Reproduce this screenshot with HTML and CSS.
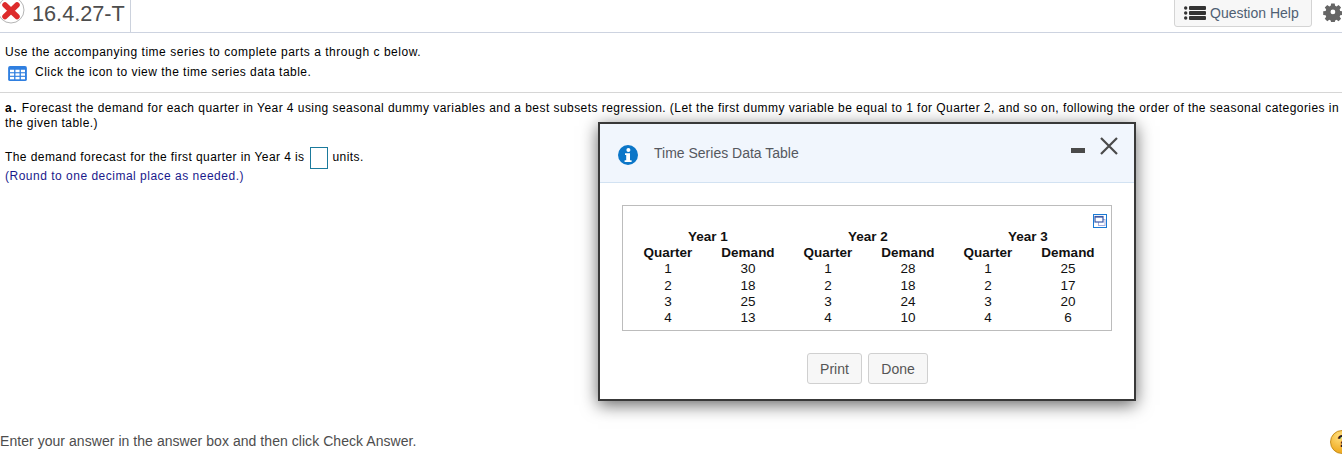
FILE: index.html
```html
<!DOCTYPE html>
<html lang="en">
<head>
<meta charset="utf-8">
<title>16.4.27-T</title>
<link rel="stylesheet" href="styles.css">
</head>
<body>
<div class="page">
  <header class="topbar">
    <div class="title-cell">
      <svg class="x-icon" viewBox="0 0 30 30" width="30" height="30" aria-hidden="true">
        <circle cx="11" cy="10" r="13" fill="#fff" stroke="#b5b5b5" stroke-width="1"/>
        <path d="M5 5 L17 16.5 M17 5 L5 16.5" stroke="#dd2b2b" stroke-width="5.5" stroke-linecap="round"/>
      </svg>
      <span class="title">16.4.27-T</span>
    </div>
    <div class="top-actions">
      <button class="help-btn" type="button">
        <svg viewBox="0 0 22 14" width="22" height="14" aria-hidden="true">
          <g fill="#333">
            <circle cx="1.7" cy="2" r="1.7"/><circle cx="1.7" cy="7" r="1.7"/><circle cx="1.7" cy="12" r="1.7"/>
            <rect x="5" y="0" width="17" height="4" rx="1"/><rect x="5" y="5" width="17" height="4" rx="1"/><rect x="5" y="10" width="17" height="4" rx="1"/>
          </g>
        </svg>
        <span>Question Help</span>
      </button>
      <svg class="gear" viewBox="0 0 24 24" width="20" height="20" aria-hidden="true">
        <path fill="#666" fill-rule="evenodd" d="M9.5 0h5l.6 3.4 2 .8 2.9-2 3.5 3.5-2 2.9.8 2 3.4.6v5l-3.4.6-.8 2 2 2.9-3.5 3.5-2.9-2-2 .8-.6 3.4h-5l-.6-3.4-2-.8-2.9 2-3.5-3.5 2-2.9-.8-2-3.4-.6v-5l3.4-.6.8-2-2-2.9 3.5-3.5 2.9 2 2-.8zM12 8.6a3.4 3.4 0 1 0 0 6.8 3.4 3.4 0 0 0 0-6.8z" transform="scale(.85) translate(2 2)"/>
      </svg>
    </div>
  </header>

  <section class="intro">
    <p>Use the accompanying time series to complete parts a through c below.</p>
    <p class="icon-line">
      <svg viewBox="0 0 20 16" width="19" height="15" aria-hidden="true">
        <rect width="20" height="16" rx="2" fill="#2f7fe0"/>
        <g fill="#fff">
          <rect x="2" y="4" width="4.4" height="2.6"/><rect x="7.8" y="4" width="4.4" height="2.6"/><rect x="13.6" y="4" width="4.4" height="2.6"/>
          <rect x="2" y="7.8" width="4.4" height="2.6"/><rect x="7.8" y="7.8" width="4.4" height="2.6"/><rect x="13.6" y="7.8" width="4.4" height="2.6"/>
          <rect x="2" y="11.6" width="4.4" height="2.6"/><rect x="7.8" y="11.6" width="4.4" height="2.6"/><rect x="13.6" y="11.6" width="4.4" height="2.6"/>
        </g>
      </svg>
      <span>Click the icon to view the time series data table.</span>
    </p>
  </section>

  <section class="question">
    <p class="part"><b>a.</b> Forecast the demand for each quarter in Year 4 using seasonal dummy variables and a best subsets regression. (Let the first dummy variable be equal to 1 for Quarter 2, and so on, following the order of the seasonal categories in the given table.)</p>
    <p class="answer-line">The demand forecast for the first quarter in Year 4 is <span class="answer-box"></span> units.</p>
    <p class="hint">(Round to one decimal place as needed.)</p>
  </section>

  <footer class="footer">Enter your answer in the answer box and then click Check Answer.</footer>
  <div class="help-ball">?</div>

  <div class="modal" role="dialog" aria-label="Time Series Data Table">
    <div class="modal-head">
      <svg class="info" viewBox="0 0 20 20" width="20" height="20" aria-hidden="true">
        <circle cx="10" cy="10" r="10" fill="#0b76c8"/>
        <circle cx="10.4" cy="5" r="2" fill="#fff"/>
        <path fill="#fff" d="M7 8.2h5v7h1.6V17H6.6v-1.8h1.6v-5.2H7z"/>
      </svg>
      <span class="modal-title">Time Series Data Table</span>
      <span class="minimize"></span>
      <svg class="close" viewBox="0 0 18 18" width="18" height="18" aria-hidden="true">
        <path d="M1 1 L17 17 M17 1 L1 17" stroke="#4a4a4a" stroke-width="2.2" fill="none"/>
      </svg>
    </div>
    <div class="modal-body">
      <div class="table-box">
        <svg class="popout" viewBox="0 0 14 14" width="14" height="14" aria-hidden="true">
          <rect x=".5" y=".5" width="13" height="13" fill="#fff" stroke="#1a7ad4"/>
          <rect x="5.5" y="5.5" width="6.5" height="6" fill="#fff" stroke="#a9aede"/>
          <rect x="2" y="2.5" width="8" height="5.5" fill="#fff" stroke="#3d5aa8" stroke-width="1.2"/>
          <rect x="2" y="2" width="8" height="1.6" fill="#3d5aa8"/>
        </svg>
        <table class="data">
          <thead>
            <tr><th colspan="2">Year 1</th><th colspan="2">Year 2</th><th colspan="2">Year 3</th></tr>
            <tr><th>Quarter</th><th>Demand</th><th>Quarter</th><th>Demand</th><th>Quarter</th><th>Demand</th></tr>
          </thead>
          <tbody>
            <tr><td>1</td><td>30</td><td>1</td><td>28</td><td>1</td><td>25</td></tr>
            <tr><td>2</td><td>18</td><td>2</td><td>18</td><td>2</td><td>17</td></tr>
            <tr><td>3</td><td>25</td><td>3</td><td>24</td><td>3</td><td>20</td></tr>
            <tr><td>4</td><td>13</td><td>4</td><td>10</td><td>4</td><td>6</td></tr>
          </tbody>
        </table>
      </div>
      <div class="modal-actions">
        <button class="btn btn-print" type="button">Print</button>
        <button class="btn btn-done" type="button">Done</button>
      </div>
    </div>
  </div>
</div>
</body>
</html>
```
FILE: styles.css
```css
* { box-sizing: border-box; }
html, body { margin: 0; padding: 0; }
body {
  width: 1342px;
  height: 455px;
  overflow: hidden;
  background: #fff;
  font-family: "Liberation Sans", Arial, sans-serif;
  font-size: 12px;
  color: #000;
}
p { margin: 0; }
.page {
  position: relative;
  width: 1342px;
  height: 455px;
  overflow: hidden;
  display: flex;
  flex-direction: column;
}
.topbar {
  height: 33px;
  flex: none;
  display: flex;
  justify-content: space-between;
  border-bottom: 1px solid #cdd3e0;
}
.title-cell {
  width: 131px;
  height: 32px;
  border-right: 1px solid #ccd2dd;
  display: flex;
  align-items: flex-start;
}
.x-icon { flex: none; width: 30px; height: 30px; }
.title {
  font-size: 21.7px;
  line-height: 25px;
  margin-top: 1px;
  color: #4d4d4d;
  margin-left: 2px;
}
.top-actions { display: flex; align-items: flex-start; }
.help-btn {
  width: 138px;
  height: 28px;
  margin-top: -1px;
  padding: 0 0 0 9px;
  display: flex;
  align-items: center;
  gap: 4px;
  background: #f7f7f7;
  border: 1px solid #d4d4d4;
  border-radius: 0 0 3px 3px;
  font: 14px "Liberation Sans", Arial, sans-serif;
  color: #4f5f73;
}
.gear { margin: 2px -1px 0 11px; }
.intro {
  height: 60px;
  flex: none;
  padding: 9px 5px 0;
  border-bottom: 1px solid #d6d6d6;
  line-height: 20px;
  letter-spacing: .53px;
}
.icon-line { display: flex; align-items: center; gap: 8px; margin-left: 3px; letter-spacing: .47px; }
.icon-line svg { flex: none; margin-top: 3px; }
.question { padding: 8px 0 0 5px; letter-spacing: .45px; line-height: 15px; }
.part { margin-bottom: 14px; }
.part b { letter-spacing: 1.5px; }
.answer-line { line-height: 24px; letter-spacing: .42px; }
.answer-box {
  display: inline-block;
  width: 18px;
  height: 22px;
  border: 1px solid #1b7a9c;
  vertical-align: middle;
  margin: 0 1px 0 1.5px;
}
.hint { color: #1a1a8c; line-height: 15px; margin-top: 0; letter-spacing: .5px; }
.footer {
  position: absolute;
  left: 0;
  top: 432px;
  font-size: 14px;
  line-height: 18px;
  letter-spacing: .05px;
  color: #4d4d4d;
}
.help-ball {
  position: absolute;
  left: 1330px;
  top: 430px;
  width: 24px;
  height: 24px;
  border-radius: 50%;
  background: radial-gradient(circle at 40% 25%, #ffdf7e, #f0ad25 70%);
  border: 1px solid #c58d1e;
  font: bold 17px/22px "Liberation Sans", Arial, sans-serif;
  padding-left: 6px;
  color: #222;
}
.modal {
  position: absolute;
  left: 598px;
  top: 122px;
  width: 538px;
  height: 279px;
  background: #fff;
  border: 2px solid #383838;
  box-shadow: 0 4px 16px rgba(0,0,0,.6);
}
.modal-head {
  height: 59px;
  background: #f1f6fd;
  border-bottom: 1px solid #d2e2f2;
  display: flex;
  align-items: flex-start;
  padding: 0 16px 0 18px;
}
.info { flex: none; margin-top: 21px; }
.modal-title {
  margin: 21px 0 0 16px;
  font-size: 14px;
  line-height: 17px;
  color: #55585f;
  flex: 1;
}
.minimize {
  width: 14px;
  height: 5px;
  margin-top: 24px;
  background: #4a4a4a;
}
.close { flex: none; margin: 13px 0 0 15px; }
.modal-body { padding: 22px 22px 0; }
.table-box {
  position: relative;
  height: 126px;
  width: 490px;
  border: 1px solid #bcbcbc;
  padding: 23px 0 0 5px;
}
.popout { position: absolute; right: 4px; top: 8px; }
.data { border-collapse: collapse; table-layout: fixed; width: 480px; font-size: 13.5px; }
.data th, .data td {
  width: 80px;
  padding: 0;
  height: 16px;
  line-height: 16px;
  text-align: center;
  vertical-align: top;
  color: #111;
}
.data tbody tr:first-child td { height: 17px; }
.data th { font-weight: bold; }
.modal-actions {
  display: flex;
  justify-content: center;
  gap: 6px;
  margin-top: 22px;
  padding-left: 1px;
}
.btn {
  height: 31px;
  padding: 0;
  background: #f7f7f7;
  border: 1px solid #d0d0d0;
  border-radius: 3px;
  font: 14px "Liberation Sans", Arial, sans-serif;
  color: #555;
}
.btn-print { width: 55px; }
.btn-done { width: 60px; }
```
